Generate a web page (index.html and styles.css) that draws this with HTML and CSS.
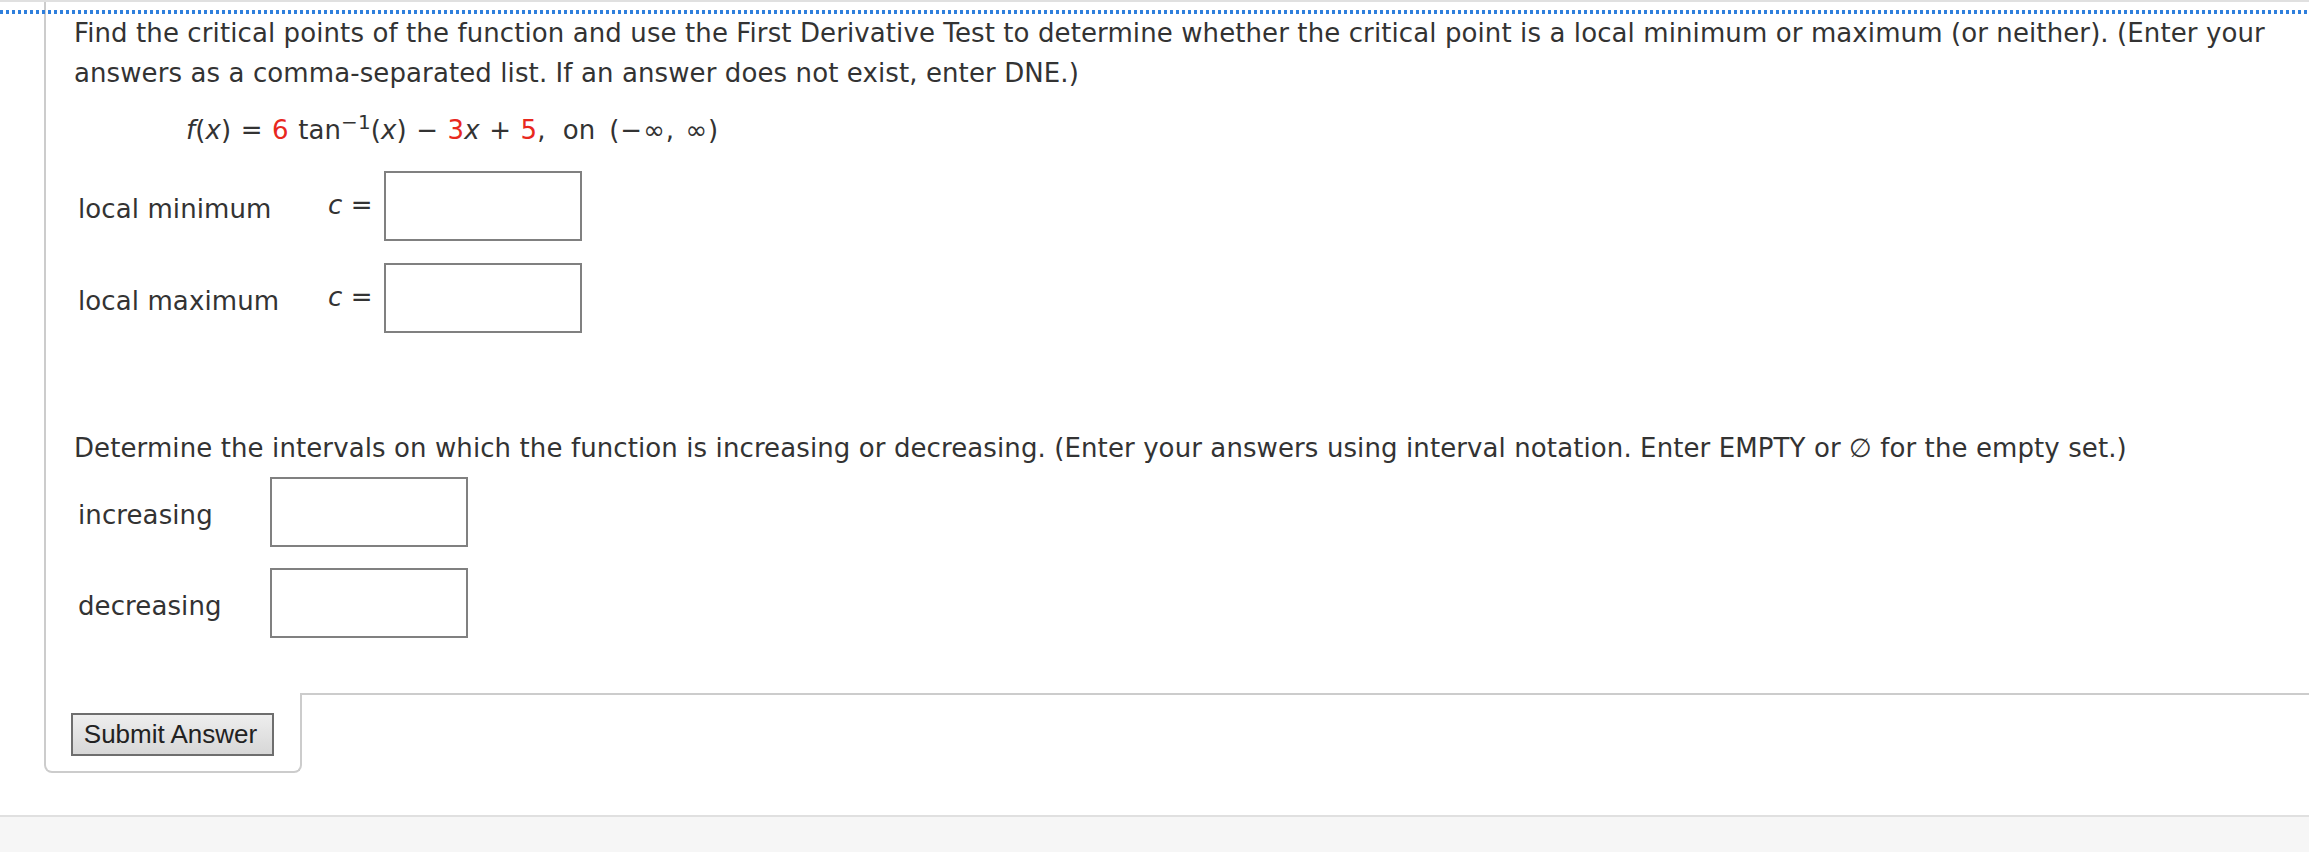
FILE: index.html
```html
<!DOCTYPE html>
<html lang="en">
<head>
<meta charset="utf-8">
<title>Critical points</title>
<link rel="stylesheet" href="styles.css">
</head>
<body>
<div class="topbar"></div>
<div class="page">
  <div class="dotted"></div>
  <div class="question">
    <div class="content">
      <p class="prompt">Find the critical points of the function and use the First Derivative Test to determine whether the critical point is a local minimum or maximum (or neither). (Enter your answers as a comma-separated list. If an answer does not exist, enter DNE.)</p>
      <div class="formula"><span class="it">f</span>(<span class="it">x</span>) = <span class="red">6</span> tan<span class="sup">−1</span>(<span class="it">x</span>) − <span class="red">3</span><span class="it">x</span> + <span class="red">5</span>,<span class="on">on</span><span class="interval">(−∞, ∞)</span></div>
      <div class="rows first-rows">
        <div class="row">
          <span class="label wide">local minimum</span>
          <span class="var"><span class="it">c</span> =</span>
          <span class="box"></span>
        </div>
        <div class="row">
          <span class="label wide">local maximum</span>
          <span class="var"><span class="it">c</span> =</span>
          <span class="box"></span>
        </div>
      </div>
      <p class="prompt second">Determine the intervals on which the function is increasing or decreasing. (Enter your answers using interval notation. Enter EMPTY or ∅ for the empty set.)</p>
      <div class="rows second-rows">
        <div class="row">
          <span class="label narrow">increasing</span>
          <span class="box"></span>
        </div>
        <div class="row">
          <span class="label narrow">decreasing</span>
          <span class="box"></span>
        </div>
      </div>
    </div>
    <div class="footer">
      <div class="tab"><button class="submit" type="button">Submit Answer</button></div>
      <div class="filler"></div>
    </div>
  </div>
</div>
<div class="pagefoot"></div>
</body>
</html>
```
FILE: styles.css
```css
html, body {
  margin: 0;
  padding: 0;
  background: #ffffff;
}
body {
  font-family: "DejaVu Sans", Verdana, sans-serif;
  font-size: 26px;
  line-height: 40px;
  letter-spacing: 0.1px;
  color: #333333;
}
.topbar {
  height: 2px;
  background: #e0e0e0;
}
.page {
  position: relative;
  padding-left: 44px;
}
.dotted {
  position: absolute;
  top: 8px;
  left: 0;
  right: 0;
  height: 4px;
  background: repeating-linear-gradient(to right, #2f7fdc 0 3px, transparent 3px 6px);
}
.content {
  border-left: 2px solid #cccccc;
  padding: 11px 14px 55px 28px;
}
.prompt {
  margin: 0;
}
.formula {
  margin-top: 17px;
  padding-left: 112px;
  height: 40px;
  word-spacing: 1.1px;
}
.it {
  font-style: italic;
}
.red {
  color: #e8281e;
}
.sup {
  font-size: 20px;
  line-height: 0;
  vertical-align: 10px;
}
.on {
  margin: 0 14px 0 17px;
}
.interval {
  letter-spacing: 1px;
}
.rows {
  display: flex;
  flex-direction: column;
}
.first-rows {
  margin-top: 21px;
  gap: 22px;
}
.second {
  margin-top: 95px;
}
.second-rows {
  margin-top: 9px;
  gap: 21px;
}
.row {
  display: flex;
  align-items: center;
  height: 70px;
}
.label {
  padding-left: 4px;
  box-sizing: border-box;
  margin-top: 6px;
}
.label.wide {
  width: 254px;
}
.label.narrow {
  width: 196px;
}
.var {
  margin-right: 11px;
  margin-top: -3px;
}
.box {
  box-sizing: border-box;
  width: 198px;
  height: 70px;
  border: 2px solid #808080;
  background: #ffffff;
}
.footer {
  display: flex;
}
.tab {
  box-sizing: border-box;
  width: 258px;
  height: 80px;
  border: 2px solid #cccccc;
  border-top: none;
  border-radius: 0 0 8px 8px;
  padding: 20px 0 0 25px;
}
.filler {
  flex: 1;
  border-top: 2px solid #cccccc;
}
.submit {
  box-sizing: border-box;
  height: 43px;
  width: 203px;
  margin: 0;
  padding: 0 4px 0 0;
  border: 2px solid #6e6e6e;
  border-radius: 0;
  background: linear-gradient(#eeeeee, #d7d7d7);
  font-family: "Liberation Sans", Arial, sans-serif;
  font-size: 26px;
  line-height: 39px;
  letter-spacing: 0;
  color: #222222;
}
.pagefoot {
  margin-top: 42px;
  height: 35px;
  border-top: 2px solid #e0e0e0;
  background: #f6f6f6;
}
```
